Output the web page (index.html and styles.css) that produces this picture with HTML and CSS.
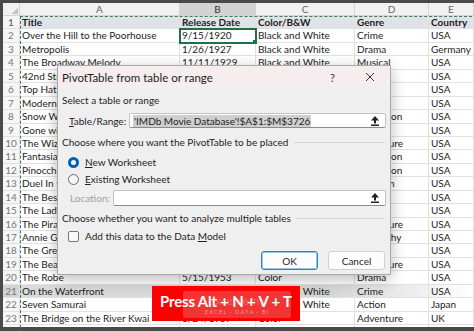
FILE: index.html
```html
<!DOCTYPE html>
<html>
<head>
  <title>PivotTable from table or range</title>
  <link rel="stylesheet" href="styles.css">
</head>
<body>
  <div class="screen">
    <div class="sheet">
      <div class="row head">
        <div class="corner"></div>
        <div class="col">A</div>
        <div class="col active">B</div>
        <div class="col">C</div>
        <div class="col">D</div>
        <div class="col">E</div>
      </div>
      <div class="row titles">
        <div class="num">1</div><div class="cell">Title</div><div class="cell">Release Date</div><div class="cell">Color/B&amp;W</div><div class="cell">Genre</div><div class="cell">Country</div>
      </div>
      <div class="row">
        <div class="num">2</div><div class="cell">Over the Hill to the Poorhouse</div><div class="cell picked">9/15/1920</div><div class="cell">Black and White</div><div class="cell">Crime</div><div class="cell">USA</div>
      </div>
      <div class="row">
        <div class="num">3</div><div class="cell">Metropolis</div><div class="cell">1/26/1927</div><div class="cell">Black and White</div><div class="cell">Drama</div><div class="cell">Germany</div>
      </div>
      <div class="row">
        <div class="num">4</div><div class="cell">The Broadway Melody</div><div class="cell">11/11/1929</div><div class="cell">Black and White</div><div class="cell">Musical</div><div class="cell">USA</div>
      </div>
      <div class="row">
        <div class="num">5</div><div class="cell">42nd Street</div><div class="cell">3/9/1933</div><div class="cell">Black and White</div><div class="cell">Musical</div><div class="cell">USA</div>
      </div>
      <div class="row">
        <div class="num">6</div><div class="cell">Top Hat</div><div class="cell">9/6/1935</div><div class="cell">Black and White</div><div class="cell">Musical</div><div class="cell">USA</div>
      </div>
      <div class="row">
        <div class="num">7</div><div class="cell">Modern Times</div><div class="cell">2/25/1936</div><div class="cell">Black and White</div><div class="cell">Musical</div><div class="cell">USA</div>
      </div>
      <div class="row">
        <div class="num">8</div><div class="cell">Snow White and the Seven Dwarfs</div><div class="cell">12/21/1937</div><div class="cell">Color</div><div class="cell">Animation</div><div class="cell">USA</div>
      </div>
      <div class="row">
        <div class="num">9</div><div class="cell">Gone with the Wind</div><div class="cell">12/15/1939</div><div class="cell">Color</div><div class="cell">Drama</div><div class="cell">USA</div>
      </div>
      <div class="row">
        <div class="num">10</div><div class="cell">The Wizard of Oz</div><div class="cell">8/25/1939</div><div class="cell">Color</div><div class="cell">Adventure</div><div class="cell">USA</div>
      </div>
      <div class="row">
        <div class="num">11</div><div class="cell">Fantasia</div><div class="cell">11/13/1940</div><div class="cell">Color</div><div class="cell">Animation</div><div class="cell">USA</div>
      </div>
      <div class="row">
        <div class="num">12</div><div class="cell">Pinocchio</div><div class="cell">2/7/1940</div><div class="cell">Color</div><div class="cell">Animation</div><div class="cell">USA</div>
      </div>
      <div class="row">
        <div class="num">13</div><div class="cell">Duel In the Sun</div><div class="cell">12/31/1946</div><div class="cell">Color</div><div class="cell">Western</div><div class="cell">USA</div>
      </div>
      <div class="row">
        <div class="num">14</div><div class="cell">The Best Years of Our Lives</div><div class="cell">11/21/1946</div><div class="cell">Black and White</div><div class="cell">Drama</div><div class="cell">USA</div>
      </div>
      <div class="row">
        <div class="num">15</div><div class="cell">The Lady from Shanghai</div><div class="cell">12/24/1947</div><div class="cell">Black and White</div><div class="cell">Crime</div><div class="cell">USA</div>
      </div>
      <div class="row">
        <div class="num">16</div><div class="cell">The Pirate</div><div class="cell">5/20/1948</div><div class="cell">Color</div><div class="cell">Adventure</div><div class="cell">USA</div>
      </div>
      <div class="row">
        <div class="num">17</div><div class="cell">Annie Get Your Gun</div><div class="cell">5/17/1950</div><div class="cell">Color</div><div class="cell">Biography</div><div class="cell">USA</div>
      </div>
      <div class="row">
        <div class="num">18</div><div class="cell">The Greatest Show on Earth</div><div class="cell">1/10/1952</div><div class="cell">Color</div><div class="cell">Drama</div><div class="cell">USA</div>
      </div>
      <div class="row">
        <div class="num">19</div><div class="cell">The Beast from 20,000 Fathoms</div><div class="cell">6/13/1953</div><div class="cell">Black and White</div><div class="cell">Adventure</div><div class="cell">USA</div>
      </div>
      <div class="row">
        <div class="num">20</div><div class="cell">The Robe</div><div class="cell">5/15/1953</div><div class="cell">Color</div><div class="cell">Drama</div><div class="cell">USA</div>
      </div>
      <div class="row shaded">
        <div class="num">21</div><div class="cell">On the Waterfront</div><div class="cell">6/22/1954</div><div class="cell">Black and White</div><div class="cell">Crime</div><div class="cell">USA</div>
      </div>
      <div class="row">
        <div class="num">22</div><div class="cell">Seven Samurai</div><div class="cell">4/26/1954</div><div class="cell">Black and White</div><div class="cell">Action</div><div class="cell">Japan</div>
      </div>
      <div class="row">
        <div class="num">23</div><div class="cell">The Bridge on the River Kwai</div><div class="cell">3/24/1957</div><div class="cell">Color</div><div class="cell">Adventure</div><div class="cell">UK</div>
      </div>
      <div class="row">
        <div class="num">24</div><div class="cell">Around the World in 80 Days</div><div class="cell">10/17/1956</div><div class="cell">Black and White</div><div class="cell">Adventure</div><div class="cell">USA</div>
      </div>
    </div>

    <div class="ants"></div>

    <div class="dialog">
      <div class="dlg-title">
        <span>PivotTable from table or range</span>
        <span class="help">?</span>
        <svg class="close" width="10" height="10" viewBox="0 0 10 10"><path d="M1 1 L9 9 M9 1 L1 9" stroke="#333" stroke-width="1"/></svg>
      </div>
      <div class="dlg-body">
        <div class="line">Select a table or range</div>
        <div class="field range">
          <label><u>T</u>able/Range:</label>
          <div class="input">
            <span class="sel">'IMDb Movie Database'!$A$1:$M$3726</span>
            <svg class="pick" width="8" height="10" viewBox="0 0 8 10"><path d="M4 0 L8 4.5 L5 4.5 L5 7.5 L3 7.5 L3 4.5 L0 4.5 Z" fill="#222"/><rect x="0" y="8.5" width="8" height="1.5" fill="#222"/></svg>
          </div>
        </div>
        <div class="group">Choose where you want the PivotTable to be placed</div>
        <div class="option first"><span class="radio on"></span><span><u>N</u>ew Worksheet</span></div>
        <div class="option"><span class="radio"></span><span><u>E</u>xisting Worksheet</span></div>
        <div class="field location">
          <label>Location:</label>
          <div class="input">
            <span></span>
            <svg class="pick" width="8" height="10" viewBox="0 0 8 10"><path d="M4 0 L8 4.5 L5 4.5 L5 7.5 L3 7.5 L3 4.5 L0 4.5 Z" fill="#222"/><rect x="0" y="8.5" width="8" height="1.5" fill="#222"/></svg>
          </div>
        </div>
        <div class="group second">Choose whether you want to analyze multiple tables</div>
        <div class="option check"><span class="box"></span><span>Add this data to the Data <u>M</u>odel</span></div>
        <div class="buttons">
          <button class="btn default">OK</button>
          <button class="btn">Cancel</button>
        </div>
      </div>
    </div>

    <div class="shortcut">
      <div class="mark"><span class="mark-name">exceldemy</span><span class="mark-sub">EXCEL · DATA · BI</span></div>
      <span class="keys">Press Alt + N + V + T</span>
    </div>
  </div>
</body>
</html>
```

FILE: styles.css
```css
body { margin: 0; background: #4a4a4a; font-family: Lato, "Noto Sans", sans-serif; }
.screen { position: relative; width: 474px; height: 331px; padding: 3px 0 0 3px; box-sizing: border-box; overflow: hidden; }
.sheet { background: #fff; height: 324px; overflow: hidden; }

.row { display: grid; grid-template-columns: 17px 160px 76px 99px 74px 1fr; height: 13.44px; font-size: 10px; line-height: 13px; color: #1d1d1d; }
.row > div { border-right: 1px solid #e1e1e1; border-bottom: 1px solid #e1e1e1; box-sizing: border-box; white-space: nowrap; overflow: hidden; }
.row.head { height: 13px; background: #f1f1f1; color: #666; font-size: 10px; }
.row.head > div { border-color: #d4d4d4; }
.corner { background: linear-gradient(135deg, transparent 62%, #c4c4c4 62%) no-repeat right 1px bottom 1px / 8px 8px; }
.col { text-align: center; }
.col.active { background: #d3d3d3; color: #333; }
.num { text-align: center; color: #777; background: #f6f6f6; }
.cell { padding-left: 2px; }
.titles { font-weight: bold; }
.titles .cell { background: #dfe3e8; }
.shaded { background: linear-gradient(90deg, #dadada 0%, #d6d6d6 70%, #fff 100%); }
.shaded .num { background: #d4d4d4; }
.picked { position: relative; outline: 2px solid #1f7044; outline-offset: -1px; }
.picked::after { content: ""; position: absolute; right: -3px; bottom: -3px; width: 4px; height: 4px; background: #1f7044; border: 1px solid #fff; }

.ants { position: absolute; left: 20px; top: 16px; width: 480px; height: 330px; border: 1px dashed #3f7d58; }

.dialog { position: absolute; left: 57px; top: 65px; width: 334px; height: 210px; box-sizing: border-box; background: #efefef; border: 1px solid #a9a9a9; box-shadow: 0 4px 14px rgba(0, 0, 0, 0.28); font-size: 10px; color: #1e1e1e; }
.dlg-title { height: 22px; background: #f6eeee; display: flex; align-items: center; padding-left: 4px; font-size: 11.5px; }
.help { margin-left: auto; font-size: 11px; color: #333; }
.close { margin: 0 15px 0 30px; }
.dlg-body { padding: 6px 4px 0 4px; }
.line { height: 12px; line-height: 12px; }
.field { display: flex; align-items: center; }
.field label { flex: none; }
.input { flex: 1; display: flex; align-items: center; justify-content: space-between; background: #fff; border: 1px solid #c2c2c2; border-bottom-color: #8c8c8c; border-radius: 2px; box-sizing: border-box; padding: 0 6px 0 3px; }
.pick { display: block; }
.range { margin-top: 7px; height: 15px; padding-left: 7px; }
.range label { width: 60px; }
.range .input { height: 15px; }
.sel { background: #cfcfcf; padding: 0 1px; }
.group { display: flex; align-items: center; height: 12px; margin-top: 8px; }
.group::after { content: ""; flex: 1; height: 1px; background: #d6d6d6; margin: 0 2px 0 5px; }
.group.second { margin-top: 6px; }
.option { display: flex; align-items: center; height: 14px; margin-top: 3px; padding-left: 6px; gap: 6px; }
.option.first { margin-top: 7px; }
.radio { width: 11px; height: 11px; border-radius: 50%; border: 1px solid #6a6a6a; background: #f7f7f7; box-sizing: border-box; }
.radio.on { border: 3px solid #005fb8; background: #fff; }
.location { margin-top: 4px; height: 16px; padding-left: 8px; color: #a0a0a0; }
.location label { width: 43px; }
.location .input { height: 16px; }
.check { margin-top: 5px; }
.box { width: 11px; height: 11px; border: 1px solid #777; border-radius: 2px; background: #f9f9f9; box-sizing: border-box; }
.buttons { display: flex; gap: 10px; margin-top: 8px; padding-left: 199px; }
.btn { width: 57px; height: 19px; background: #fdfdfd; border: 1px solid #d0d0d0; border-radius: 3px; font-family: inherit; font-size: 10px; color: #1e1e1e; padding: 0; }
.btn.default { border: 1px solid #2f7fd0; box-shadow: inset 0 0 0 1px #9cc4ea; }

.shortcut { position: absolute; left: 152px; top: 286px; width: 148px; height: 35px; background: #fb0000; display: flex; align-items: center; justify-content: center; }
.keys { position: relative; color: #fff; font-weight: bold; font-size: 15px; margin-top: -6px; letter-spacing: -0.2px; }
.mark { position: absolute; left: 31px; top: 5px; width: 108px; height: 27px; background: rgba(215, 190, 190, 0.28); border-radius: 2px; display: flex; flex-direction: column; align-items: center; justify-content: flex-end; }
.mark-name { font-size: 12px; color: rgba(255, 255, 255, 0.18); font-weight: bold; }
.mark-sub { font-size: 6px; color: rgba(255, 220, 220, 0.55); letter-spacing: 1px; margin-bottom: 3px; }
```
